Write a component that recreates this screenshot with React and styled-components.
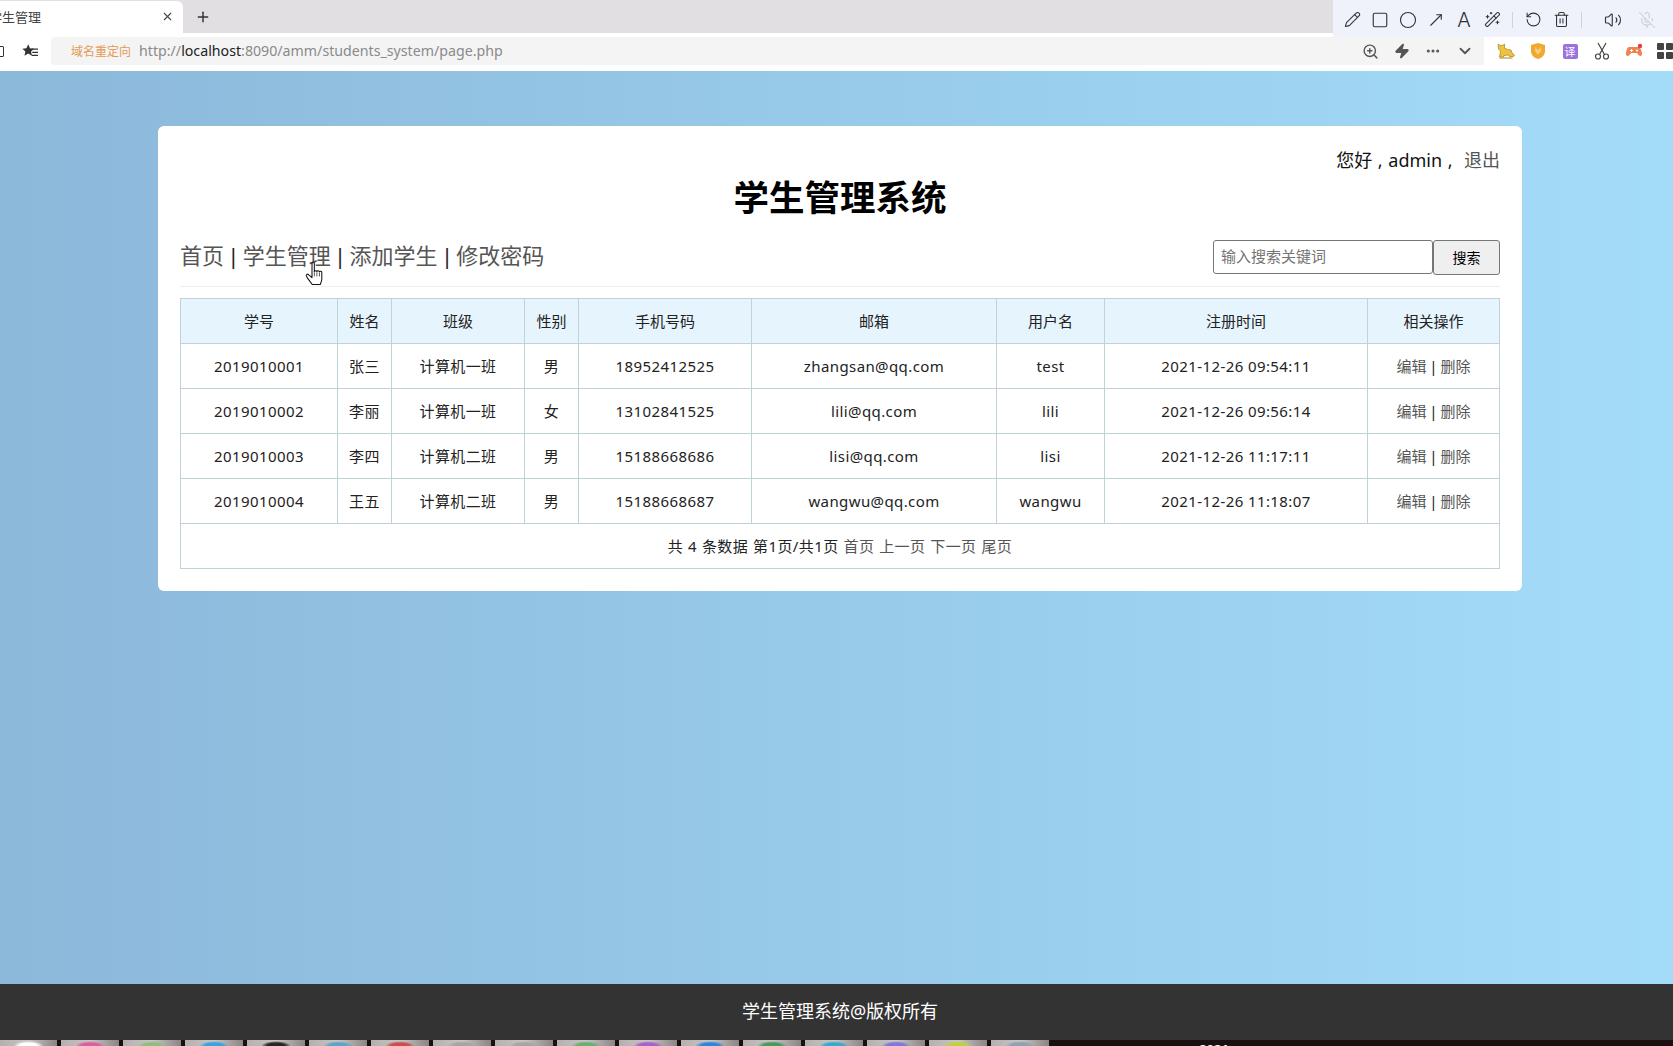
import styled, { createGlobalStyle } from "styled-components"
import {
    Pencil, Square, Circle, MoveUpRight, WandSparkles, RotateCcw, Trash2, Volume2, MicOff,
    ZoomIn, Zap, Ellipsis, ChevronDown, X, Plus,
} from "lucide-react"

const students = [
    { no: "2019010001", name: "张三", cls: "计算机一班", sex: "男", phone: "18952412525", mail: "zhangsan@qq.com", user: "test", time: "2021-12-26 09:54:11" },
    { no: "2019010002", name: "李丽", cls: "计算机一班", sex: "女", phone: "13102841525", mail: "lili@qq.com", user: "lili", time: "2021-12-26 09:56:14" },
    { no: "2019010003", name: "李四", cls: "计算机二班", sex: "男", phone: "15188668686", mail: "lisi@qq.com", user: "lisi", time: "2021-12-26 11:17:11" },
    { no: "2019010004", name: "王五", cls: "计算机二班", sex: "男", phone: "15188668687", mail: "wangwu@qq.com", user: "wangwu", time: "2021-12-26 11:18:07" },
]
const heads = ["学号", "姓名", "班级", "性别", "手机号码", "邮箱", "用户名", "注册时间", "相关操作"]
const widths = [157, 54, 133, 54, 173, 245, 108, 263, 132]
const tasks = ["#d8609f", "#8fbf7c", "#3aa2dc", "#2a2626", "#5fa4c4", "#c85050", "#a9a5a5", "#a9a5a5", "#6cb070", "#aa60c8", "#2f86d8", "#4a9a5e", "#3aa8cc", "#8078d8", "#c0d040", "#8ea2b0"]

const App = () => {
    return (
        <>
            <GlobalStyle />
            <Screen>
                <Chrome>
                    <TabRow>
                        <Tab>
                            <TabTitle>学生管理</TabTitle>
                            <X size={13} color="#444" />
                        </Tab>
                        <NewTab><Plus size={16} color="#333" strokeWidth={2.2} /></NewTab>
                    </TabRow>
                    <AddressRow>
                        <CutIcon />
                        <StarIcon viewBox="0 0 20 18">
                            <path d="M8 1.5l2 4.5 4.6.5-3.4 3.2 1 4.6L8 11.9l-4.2 2.4 1-4.6L1.400 6.500 6 6z" fill="#333" />
                            <path d="M12 7h7M12.500 10.500h6.500M12 14h7" stroke="#333" strokeWidth="1.400" />
                        </StarIcon>
                        <AddressField>
                            <Redirect>域名重定向</Redirect>
                            <Url>http://<b>localhost</b>:8090/amm/students_system/page.php</Url>
                            <FieldIcons>
                                <ZoomIn size={17} color="#555" strokeWidth={2} />
                                <Zap size={16} color="#555" fill="#555" />
                                <Ellipsis size={16} color="#555" strokeWidth={2.6} />
                                <ChevronDown size={18} color="#555" strokeWidth={2.4} />
                            </FieldIcons>
                        </AddressField>
                        <Extensions>
                            <ExtSvg viewBox="0 0 18 16">
                                <path d="M1 1l2 1.500h2.500L7.500 1v4l3 1.500 3.500.5 1 3 2.500 2-1 1.500h-4l-1-1.500-4.500.5-.5 1.500H2.500L3.500 8 1.500 6z" fill="#eec23e" stroke="#a88420" strokeWidth=".7" />
                                <path d="M2.500 15h13" stroke="#a88420" strokeWidth="1" />
                            </ExtSvg>
                            <ExtSvg viewBox="0 0 18 18">
                                <path d="M9 1l7 2v6c0 4-3 7-7 8-4-1-7-4-7-8V3z" fill="#f0a830" />
                                <path d="M6 5l3 3 3-3v4l-3 4-3-4z" fill="#f8cc78" />
                            </ExtSvg>
                            <TranslateBadge>译</TranslateBadge>
                            <ExtSvg viewBox="0 0 18 18" fill="none" stroke="#444" strokeWidth="1.200">
                                <path d="M5 1l6.500 11.500M13 1L6.500 12.500" />
                                <circle cx="5" cy="14.500" r="2.500" />
                                <circle cx="13" cy="14.500" r="2.500" />
                            </ExtSvg>
                            <ExtSvg viewBox="0 0 18 16">
                                <path d="M4 4h9c2 0 3 2 4 6 .5 3-2 4-3.500 2l-1.500-2H6l-1.500 2C3 14 .5 13 1 10c.7-4 1.500-6 3-6z" fill="#ee8350" />
                                <circle cx="15" cy="3" r="2.200" fill="#e04040" />
                                <path d="M5 7.500h3M6.500 6v3" stroke="#fff" strokeWidth="1" />
                                <circle cx="12" cy="7.500" r="1" fill="#fff" />
                            </ExtSvg>
                            <AppsGrid><i /><i /><i /><i /></AppsGrid>
                        </Extensions>
                    </AddressRow>
                    <DrawTools>
                        <ToolSlot><Pencil size={17} strokeWidth={1.500} /></ToolSlot>
                        <ToolSlot><Square size={18} strokeWidth={1.500} /></ToolSlot>
                        <ToolSlot><Circle size={18} strokeWidth={1.500} /></ToolSlot>
                        <ToolSlot><MoveUpRight size={18} strokeWidth={1.500} /></ToolSlot>
                        <ToolSlot><ToolLetter>A</ToolLetter></ToolSlot>
                        <ToolSlot><WandSparkles size={17} strokeWidth={1.500} /></ToolSlot>
                        <ToolSep />
                        <ToolSlot><RotateCcw size={17} strokeWidth={1.500} /></ToolSlot>
                        <ToolSlot><Trash2 size={17} strokeWidth={1.500} /></ToolSlot>
                        <ToolSep />
                        <ToolSlot $gap={11}><Volume2 size={18} strokeWidth={1.500} /></ToolSlot>
                        <ToolSlot $gap={6}><MicOff size={18} strokeWidth={1.400} color="#c9ccd4" /></ToolSlot>
                    </DrawTools>
                </Chrome>
                <Page>
                    <Card>
                        <Greeting>您好 , admin ,&nbsp; <GreyLink>退出</GreyLink></Greeting>
                        <Title>学生管理系统</Title>
                        <Toolbar>
                            <Nav>
                                <GreyLink>首页</GreyLink> | <GreyLink>学生管理</GreyLink> | <GreyLink>添加学生</GreyLink> | <GreyLink>修改密码</GreyLink>
                                <HandCursor viewBox="0 0 18 21">
                                    <path d="M6 2c0-1.300 2-1.300 2 0v7c0-1.200 2-1.200 2.200 0 0-1.100 2-1.100 2.200.2.200-1 2-.8 2 .4V15c0 2-.8 3.500-1.400 5H6.200C5 18 2.600 15.500 1.200 12.800c-.6-1.500 1-2.300 2-1.200L6 14z" fill="#fff" stroke="#111" strokeWidth=".9" strokeLinejoin="round" />
                                    <path d="M8 9.500V13M10.200 9.500V13M12.400 9.800V13" stroke="#111" strokeWidth=".6" />
                                </HandCursor>
                            </Nav>
                            <Search>
                                <SearchInput placeholder="输入搜索关键词" />
                                <SearchButton>搜索</SearchButton>
                            </Search>
                        </Toolbar>
                        <Table>
                            <colgroup>
                                {widths.map((w, i) => <Col key={i} $w={w} />)}
                            </colgroup>
                            <thead>
                                <tr>{heads.map((h) => <Th key={h}>{h}</Th>)}</tr>
                            </thead>
                            <tbody>
                                {students.map((s) => (
                                    <tr key={s.no}>
                                        <Td>{s.no}</Td>
                                        <Td>{s.name}</Td>
                                        <Td>{s.cls}</Td>
                                        <Td>{s.sex}</Td>
                                        <Td>{s.phone}</Td>
                                        <Td>{s.mail}</Td>
                                        <Td>{s.user}</Td>
                                        <Td>{s.time}</Td>
                                        <ActionTd><GreyLink>编辑</GreyLink> | <GreyLink>删除</GreyLink></ActionTd>
                                    </tr>
                                ))}
                                <tr>
                                    <PagerTd colSpan={9}>
                                        共 4 条数据 第1页/共1页 <GreyLink>首页</GreyLink> <GreyLink>上一页</GreyLink> <GreyLink>下一页</GreyLink> <GreyLink>尾页</GreyLink>
                                    </PagerTd>
                                </tr>
                            </tbody>
                        </Table>
                    </Card>
                </Page>
                <Footer>学生管理系统@版权所有</Footer>
                <Taskbar>
                    <TaskItem $dot="#fff" $first />
                    {tasks.map((c, i) => <TaskItem key={i} $dot={c} />)}
                    <Clock>2021</Clock>
                </Taskbar>
            </Screen>
        </>
    )
}

const GlobalStyle = createGlobalStyle`
    html, body {
        margin: 0;
        padding: 0;
        height: 100%;
        overflow: hidden;
    }
    body {
        font-family: "Noto Sans", "Noto Sans CJK SC", sans-serif;
    }
`
const Screen = styled.div`
    width: 1673px;
    height: 1046px;
    display: flex;
    flex-direction: column;
    overflow: hidden;
`
const Chrome = styled.div`
    position: relative;
    flex: none;
    height: 71px;
    background-color: white;
`
const TabRow = styled.div`
    height: 33px;
    display: flex;
    align-items: flex-end;
    background-color: #e1dfe1;
`
const Tab = styled.div`
    width: 183px;
    height: 32px;
    padding: 0 9px 2px 0;
    box-sizing: border-box;
    display: flex;
    align-items: center;
    justify-content: space-between;
    background-color: white;
    border-top-right-radius: 6px;
    overflow: hidden;
`
const TabTitle = styled.span`
    margin-left: -11px;
    font-size: 13px;
    color: #444;
`
const NewTab = styled.div`
    margin-left: 12px;
    height: 32px;
    display: flex;
    align-items: center;
`
const AddressRow = styled.div`
    height: 38px;
    padding-bottom: 2px;
    box-sizing: border-box;
    display: flex;
    align-items: center;
`
const CutIcon = styled.div`
    width: 5px;
    height: 9px;
    margin-left: -3px;
    border: 1.5px solid #333;
    border-radius: 1px;
`
const StarIcon = styled.svg`
    width: 18px;
    height: 16px;
    margin-left: 17px;
`
const AddressField = styled.div`
    width: 1433px;
    height: 28px;
    margin-left: 12px;
    padding-left: 20px;
    box-sizing: border-box;
    display: flex;
    align-items: center;
    flex: none;
    background-color: #f4f4f4;
    border-radius: 4px 0 0 4px;
`
const Redirect = styled.span`
    padding-bottom: 1px;
    font-size: 12px;
    color: #e59a52;
`
const Url = styled.span`
    margin-left: 8px;
    padding-bottom: 1px;
    font-size: 14.2px;
    color: #8a8a8a;
    white-space: nowrap;
    b {
        font-weight: normal;
        color: #222;
    }
`
const FieldIcons = styled.div`
    margin-left: auto;
    margin-right: 10px;
    display: flex;
    align-items: center;
    gap: 15px;
`
const Extensions = styled.div`
    margin-left: 13px;
    display: flex;
    align-items: center;
    gap: 14px;
    flex: none;
`
const ExtSvg = styled.svg`
    width: 18px;
    height: 18px;
`
const TranslateBadge = styled.div`
    width: 15px;
    height: 15px;
    margin: 0 1.5px;
    background-color: #9a72dd;
    border-radius: 2px;
    color: white;
    font-size: 11px;
    line-height: 15px;
    text-align: center;
`
const AppsGrid = styled.div`
    width: 16px;
    display: grid;
    grid-template-columns: 7px 7px;
    gap: 2px;
    i {
        height: 7px;
        background-color: #444;
        border-radius: 1px;
    }
`
const DrawTools = styled.div`
    position: absolute;
    top: 0;
    right: 0;
    width: 340px;
    height: 37px;
    padding: 2px 0 0 5px;
    box-sizing: border-box;
    display: flex;
    align-items: center;
    color: #333;
    background-color: #eff2fb;
`
const ToolSlot = styled.div`
    flex: none;
    width: 28px;
    margin-left: ${(props) => props.$gap || 0}px;
    display: flex;
    align-items: center;
    justify-content: center;
`
const ToolLetter = styled.span`
    font-family: Inter, "Liberation Sans", sans-serif;
    font-size: 20px;
    font-weight: 300;
    line-height: 20px;
    color: #333;
`
const ToolSep = styled.div`
    width: 1px;
    height: 16px;
    margin: 0 6px;
    background-color: #cfd2da;
`
const Page = styled.div`
    flex: 1;
    padding: 55px 151px 0 158px;
    background: linear-gradient(to right, #8cb8da, #a3dcf9);
`
const Card = styled.div`
    padding: 20px 22px 22px;
    background-color: white;
    border-radius: 6px;
`
const Greeting = styled.div`
    font-size: 18px;
    line-height: 28px;
    text-align: right;
    word-spacing: 1px;
    color: #111;
`
const GreyLink = styled.a`
    color: #555;
    cursor: pointer;
`
const Title = styled.div`
    font-size: 35.5px;
    font-weight: bold;
    line-height: 47px;
    text-align: center;
    color: black;
`
const Toolbar = styled.div`
    height: 46px;
    padding-top: 19px;
    display: flex;
    justify-content: space-between;
    align-items: flex-start;
    border-bottom: 1px solid #eee;
    margin-bottom: 11px;
`
const Nav = styled.div`
    position: relative;
    font-size: 22px;
    line-height: 30px;
    word-spacing: -2.4px;
    color: #222;
`
const HandCursor = styled.svg`
    position: absolute;
    left: 125px;
    top: 21px;
    width: 21px;
    height: 25px;
`
const Search = styled.div`
    display: flex;
    align-items: flex-start;
`
const SearchInput = styled.input`
    width: 220px;
    height: 34px;
    padding: 0 7px 2px;
    box-sizing: border-box;
    border: 1px solid #767676;
    border-radius: 3px;
    font-family: inherit;
    font-size: 15px;
    &::placeholder {
        color: #757575;
    }
`
const SearchButton = styled.button`
    width: 67px;
    height: 35px;
    padding: 0 0 2px;
    background-color: #efefef;
    border: 1px solid #767676;
    border-radius: 3px;
    font-family: inherit;
    font-size: 14px;
    color: black;
`
const Table = styled.table`
    width: 1319px;
    table-layout: fixed;
    border-collapse: collapse;
    font-size: 15px;
    color: #222;
`
const Col = styled.col`
    width: ${(props) => props.$w}px;
`
const Th = styled.th`
    height: 45px;
    padding: 0 0 2px;
    box-sizing: border-box;
    font-weight: normal;
    text-align: center;
    background-color: #e6f4fd;
    border: 1px solid #bcd3dc;
`
const Td = styled.td`
    height: 45px;
    padding: 0 0 1px;
    box-sizing: border-box;
    text-align: center;
    border: 1px solid #bcd3d8;
    letter-spacing: 0.4px;
`
const ActionTd = styled(Td)`
    letter-spacing: 0;
    word-spacing: -1px;
`
const PagerTd = styled(Td)`
    padding-bottom: 2px;
    word-spacing: 0.6px;
`
const Footer = styled.div`
    flex: none;
    height: 56px;
    padding: 0 0 4px 7px;
    box-sizing: border-box;
    display: flex;
    align-items: center;
    justify-content: center;
    font-size: 18px;
    color: white;
    background-color: #333;
`
const Taskbar = styled.div`
    flex: none;
    height: 6px;
    display: flex;
    gap: 4px;
    background-color: #1a1012;
    overflow: hidden;
`
const TaskItem = styled.div`
    flex: none;
    width: ${(props) => (props.$first ? "57px" : "58px")};
    height: 6px;
    background: radial-gradient(ellipse 15px 5px at 50% 100%, ${(props) => props.$dot} 60%, transparent 100%),
        linear-gradient(to right, #b5b0b0, #c8c5c5 50%, #8b8585);
`
const Clock = styled.div`
    margin-left: 146px;
    padding-top: 3px;
    font-size: 13px;
    font-weight: bold;
    line-height: 13px;
    color: white;
`

export default App;
